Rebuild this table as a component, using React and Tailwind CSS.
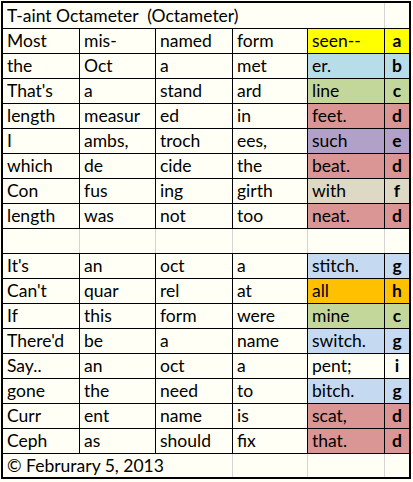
import React from 'react';

const RED = 'bg-[#da9694]';
const BLUE = 'bg-[#c5d9f1]';
const GREEN = 'bg-[#c4d79b]';

const verse1 = [
    { words: ['Most', 'mis-', 'named', 'form', 'seen--'], rhyme: 'a', fill: 'bg-[#ffff00]' },
    { words: ['the', 'Oct', 'a', 'met', 'er.'], rhyme: 'b', fill: 'bg-[#b7dee8]' },
    { words: ["That's", 'a', 'stand', 'ard', 'line'], rhyme: 'c', fill: GREEN },
    { words: ['length', 'measur', 'ed', 'in', 'feet.'], rhyme: 'd', fill: RED },
    { words: ['I', 'ambs,', 'troch', 'ees,', 'such'], rhyme: 'e', fill: 'bg-[#b1a0c7]' },
    { words: ['which', 'de', 'cide', 'the', 'beat.'], rhyme: 'd', fill: RED },
    { words: ['Con', 'fus', 'ing', 'girth', 'with'], rhyme: 'f', fill: 'bg-[#ddd9c4]' },
    { words: ['length', 'was', 'not', 'too', 'neat.'], rhyme: 'd', fill: RED }
];

const verse2 = [
    { words: ["It's", 'an', 'oct', 'a', 'stitch.'], rhyme: 'g', fill: BLUE },
    { words: ["Can't", 'quar', 'rel', 'at', 'all'], rhyme: 'h', fill: 'bg-[#ffc000]' },
    { words: ['If', 'this', 'form', 'were', 'mine'], rhyme: 'c', fill: GREEN },
    { words: ["There'd", 'be', 'a', 'name', 'switch.'], rhyme: 'g', fill: BLUE },
    { words: ['Say..', 'an', 'oct', 'a', 'pent;'], rhyme: 'i', fill: '' },
    { words: ['gone', 'the', 'need', 'to', 'bitch.'], rhyme: 'g', fill: BLUE },
    { words: ['Curr', 'ent', 'name', 'is', 'scat,'], rhyme: 'd', fill: RED },
    { words: ['Ceph', 'as', 'should', 'fix', 'that.'], rhyme: 'd', fill: RED }
];

const cols = 'grid grid-cols-[77px_76px_77px_75px_77px_24px]';

const Line = ({ row }) => (
    <div className={`${cols} h-[25px] border-b border-black`}>
        {row.words.map((w, i) => (
            <div
                key={i}
                className={`flex items-end pl-[4px] pb-[2px] border-r border-black ${i === 4 ? row.fill : ''}`}
            >
                {w}
            </div>
        ))}
        <div className={`flex items-end justify-center pb-[2px] font-bold ${row.fill}`}>{row.rhyme}</div>
    </div>
);

const App = () => {
    return (
        <div className="w-[413px] h-[482px] bg-[#fffff5] pl-[1px] pt-[1px]">
            <div
                className="w-[410px] border-2 border-black text-[17.5px] leading-[20px] text-black"
                style={{ fontFamily: 'Lato, "Liberation Sans", sans-serif' }}
            >
                <div className={`${cols} h-[26px] border-b border-black`}>
                    <div className="col-span-5 flex items-end pl-[4px] pb-[2px] whitespace-pre border-r border-[#d4d4d4]">
                        {'T-aint Octameter  (Octameter)'}
                    </div>
                    <div />
                </div>
                {verse1.map((row, i) => (
                    <Line key={i} row={row} />
                ))}
                <div className={`${cols} h-[25px] border-b border-black`}>
                    <div className="border-r border-[#d4d4d4]" />
                    <div className="border-r border-[#d4d4d4]" />
                    <div className="border-r border-[#d4d4d4]" />
                    <div className="border-r border-[#d4d4d4]" />
                    <div className="border-r border-[#d4d4d4]" />
                    <div />
                </div>
                {verse2.map((row, i) => (
                    <Line key={i} row={row} />
                ))}
                <div className={`${cols} h-[23px]`}>
                    <div className="col-span-3 flex items-end pl-[4px] pb-[1px] whitespace-nowrap border-r border-[#d4d4d4]">
                        © Februrary 5, 2013
                    </div>
                    <div className="border-r border-[#d4d4d4]" />
                    <div className="border-r border-[#d4d4d4]" />
                    <div />
                </div>
            </div>
        </div>
    );
};

export default App;
